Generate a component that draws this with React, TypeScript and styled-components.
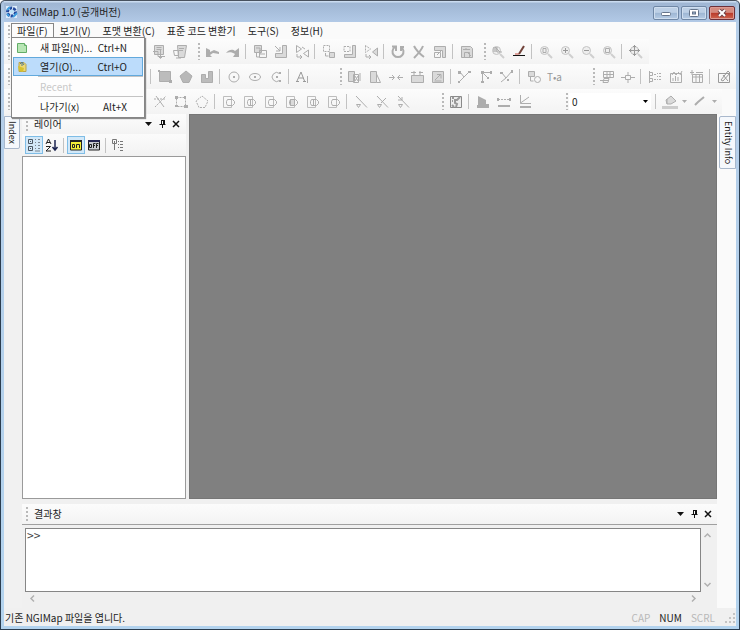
import React from "react";
import styled, { createGlobalStyle, css } from "styled-components";

const GlobalStyle = createGlobalStyle`
  * { box-sizing: border-box; }
  html, body { margin: 0; height: 100%; }
  body, button, select, textarea {
    font-family: "Noto Sans CJK KR", "Open Sans", sans-serif;
    font-size: 10px;
    line-height: 16px;
    color: #1c1c1c;
  }
  button { margin: 0; padding: 0; border: 0; background: none; }
`;

/* ---------- window frame ---------- */

const Window = styled.div`
  display: flex;
  flex-direction: column;
  min-height: 100vh;
  padding: 0 3px 3px;
  background: linear-gradient(#abc2de, #b5cee9 22px, #b3d3ee);
  border: 1px solid #2b3d4f;
  border-top-color: #48525f;
  border-radius: 5px 5px 0 0;
`;

const TitleBar = styled.header`
  display: flex;
  align-items: center;
  height: 21px;
  padding: 0 1px;
  gap: 3px;
  background: linear-gradient(#cbdcf0 1px, #9fb6d3 2px, #b2c9e6);
`;

const Title = styled.h1`
  flex: 1;
  margin: 0;
  font-size: 10px;
  font-weight: 400;
`;

const Caption = styled.div`
  display: flex;
  gap: 2px;
  padding-top: 3px;
`;

const CaptionButton = styled.button<{ $danger?: boolean }>`
  display: grid;
  place-items: center;
  width: 26px;
  height: 14px;
  border: 1px solid ${(p) => (p.$danger ? "#6e3038" : "#6f87a5")};
  border-radius: 2px;
  box-shadow: inset 0 0 0 1px ${(p) => (p.$danger ? "#dc9b93" : "#cfdeef")};
  background: ${(p) =>
    p.$danger
      ? "linear-gradient(#d58b7f 45%, #b93a2a 50%, #cf6650)"
      : "linear-gradient(#bdd0e6 45%, #9db6d3 50%, #b7cde6)"};
`;

const Client = styled.div`
  display: flex;
  flex: 1;
  flex-direction: column;
  background: #f0f0f0;
`;

/* ---------- menu ---------- */

const MenuBar = styled.nav`
  display: flex;
  align-items: stretch;
  height: 17px;
  padding-top: 1px;
  background: #fafafa;
`;

const MenuSlot = styled.div`
  position: relative;
  display: flex;
`;

const MenuButton = styled.button<{ $open?: boolean }>`
  padding: 0 5px;
  line-height: 14px;
  white-space: nowrap;
  border: 1px solid transparent;
  ${(p) =>
    p.$open &&
    css`
      background: #fcfcfc;
      border-color: #868686 #868686 transparent;
    `}
`;

const Popup = styled.div`
  position: absolute;
  z-index: 5;
  top: 100%;
  left: 0;
  width: 134px;
  padding: 0 1px 1px;
  margin-top: -2px;
  background: #fdfdfd;
  border: 1px solid #868686;
  box-shadow: 1px 1px 1px #8c8c8c;
`;

const PopupItem = styled.button<{ $active?: boolean }>`
  display: grid;
  grid-template-columns: 24px 1fr auto;
  align-items: center;
  width: 100%;
  height: 19px;
  padding: 0 15px 0 2px;
  text-align: left;
  white-space: nowrap;
  border: 1px solid ${(p) => (p.$active ? "#62a9dc" : "transparent")};
  background: ${(p) => (p.$active ? "#bcdcfb" : "transparent")};
  &:disabled { color: #c8c8c8; }
`;

const PopupRule = styled.hr`
  height: 1px;
  margin: 0 0 0 25px;
  border: 0;
  background: #c4c4c4;
`;

/* ---------- toolbars ---------- */

const Toolbars = styled.div`
  background: #fafafa;
`;

const ToolRow = styled.div`
  display: flex;
  align-items: stretch;
  height: 25px;
  overflow: hidden;
`;

const ToolBar = styled.div<{ $basis?: number }>`
  display: flex;
  flex: ${(p) => (p.$basis ? `0 0 ${p.$basis}px` : "0 0 auto")};
  align-items: center;
  padding-right: 3px;
  background: linear-gradient(#fcfcfc, #f3f3f3);
`;

const Grip = styled.span<{ $tall?: number }>`
  flex: none;
  align-self: center;
  width: 2px;
  height: ${(p) => p.$tall ?? 17}px;
  margin: 0 1px 0 4px;
  background: repeating-linear-gradient(#b9b9b9 0 2px, transparent 2px 4px);
`;

const Hidden = styled.span<{ $width: number }>`
  flex: none;
  width: ${(p) => p.$width}px;
`;

const ToolButton = styled.button`
  display: grid;
  flex: none;
  place-items: center;
  width: 21px;
  height: 21px;
  color: #adadad;
`;

const Divider = styled.span`
  flex: none;
  width: 1px;
  height: 15px;
  margin: 0 3px 0 2px;
  background: #c2c2c2;
`;

const Combo = styled.label`
  display: flex;
  position: relative;
  width: 82px;
  height: 17px;
  background: #fff;
  margin-right: 2px;
`;

const ComboSelect = styled.select`
  width: 100%;
  padding: 0 3px;
  border: 0;
  appearance: none;
  background: transparent;
  line-height: 17px;
`;

const ComboArrow = styled.svg`
  position: absolute;
  right: 3px;
  top: 7px;
  pointer-events: none;
`;

const DropButton = styled(ToolButton)`
  width: 9px;
`;

/* ---------- docking area ---------- */

const Workspace = styled.div`
  display: flex;
  flex: 1;
`;

const DockStrip = styled.aside<{ $right?: boolean }>`
  flex: none;
  width: ${(p) => (p.$right ? 19 : 18)}px;
  padding: 2px 0 0 ${(p) => (p.$right ? 2 : 0)}px;
  background: ${(p) => (p.$right ? "#fafafa" : "#f1f1f1")};
`;

const DockTab = styled.button<{ $right?: boolean }>`
  display: block;
  width: ${(p) => (p.$right ? 17 : 16)}px;
  padding: 4px 0;
  writing-mode: vertical-rl;
  font-size: 9px;
  line-height: 14px;
  background: #f5f8fc;
  border: 1px solid #a9b8cc;
  white-space: nowrap;
  border-radius: ${(p) => (p.$right ? "2px 0 0 2px" : "0 2px 2px 0")};
`;

const Center = styled.main`
  display: flex;
  flex: 1;
  flex-direction: column;
  gap: 5px;
  min-width: 0;
`;

const Upper = styled.div`
  display: flex;
  flex: 1;
  gap: 3px;
`;

const LayerPanel = styled.section`
  display: flex;
  flex: none;
  flex-direction: column;
  width: 164px;
`;

const PanelHeader = styled.div<{ $ruled?: boolean }>`
  display: flex;
  align-items: center;
  height: ${(p) => (p.$ruled ? 21 : 20)}px;
  padding-right: ${(p) => (p.$ruled ? 2 : 3)}px;
  background: linear-gradient(#fcfcfc, #f3f3f3);
  border-bottom: ${(p) => (p.$ruled ? "1px solid #a0a0a0" : "0")};
`;

const PanelTitle = styled.h2`
  flex: 1;
  margin: 0 0 0 5px;
  font-size: 10px;
  font-weight: 400;
`;

const PanelButton = styled.button`
  display: grid;
  place-items: center;
  width: 14px;
  height: 14px;
  color: #111;
`;

const PanelTools = styled.div`
  display: flex;
  align-items: center;
  height: 22px;
  padding: 0 3px;
  background: linear-gradient(#fbfbfb, #f2f2f2);
`;

const Toggle = styled.button<{ $on?: boolean }>`
  display: grid;
  place-items: center;
  width: 18px;
  height: 18px;
  border: 1px solid ${(p) => (p.$on ? "#7fbde6" : "transparent")};
  background: ${(p) => (p.$on ? "#d2e8f8" : "transparent")};
`;

const LayerList = styled.div`
  flex: 1;
  background: #fff;
  border: 1px solid #9a9a9a;
`;

const Canvas = styled.section`
  flex: 1;
  background: #808080;
  border: 1px solid #767676;
`;

const ResultPanel = styled.section`
  height: 104px;
`;

const ResultBody = styled.div`
  display: grid;
  grid-template-columns: 1fr 13px;
  grid-template-rows: 64px 15px;
  padding: 3px 3px 0;
`;

const Console = styled.textarea`
  width: 100%;
  height: 100%;
  padding: 0 1px;
  border: 1px solid #868686;
  background: #fff;
  resize: none;
  outline: none;
  line-height: 11px;
  font-size: 12px;
  color: #444;
`;

const ScrollBar = styled.div<{ $vertical?: boolean }>`
  display: flex;
  flex-direction: ${(p) => (p.$vertical ? "column" : "row")};
  justify-content: space-between;
  padding: ${(p) => (p.$vertical ? "1px 0" : "0 1px")};
  color: #b0b0b0;
`;

const ScrollButton = styled.button`
  display: grid;
  place-items: center;
  width: 13px;
  height: 13px;
  color: inherit;
`;

const StatusBar = styled.footer`
  display: flex;
  align-items: center;
  height: 18px;
  padding: 2px 0 0 1px;
  background: #f0f0f0;
`;

const StatusText = styled.span`
  flex: 1;
`;

const LockKey = styled.span<{ $on?: boolean }>`
  margin-right: 9px;
  color: ${(p) => (p.$on ? "#1c1c1c" : "#b8b8b8")};
`;

/* ---------- drawings ---------- */

const soft = { fill: "#dadada" };
const solid = { fill: "currentColor", stroke: "none" };
const lens = (
  <>
    <circle cx="6.5" cy="6.5" r="4" fill="#eee" stroke="#c4c4c4" />
    <path d="M10 10l4 4" strokeWidth="2" stroke="#cfcfcf" />
  </>
);
const boolShape = (
  <>
    <path stroke="#bdbdbd" d="M2.5 2.5h8v11h-8z" />
    <path d="M6.5 5.500h5l2 2v2l-2 2h-5l-1-2v-2z" />
  </>
);
const trimShape = <path d="M3 2l11 11.5M3.5 10.5h4l-2 3z" />;

const icons: Record<string, React.ReactNode> = {
  saveAll: <><path {...soft} d="M3.5 1.5h9v9h-9z" /><path d="M5.5 3.5h5M5.5 5.5h5M2 7.5h5v5h7M9.5 6v8M7 12l2.5 2.5L12 12" /></>,
  saveDoc: <><path {...soft} d="M5.5 1.5h9l-2 12h-6z" /><path d="M7 4.5h5M7 6.5h4M1.5 6.5h5v5h-4zM4 14h5" /></>,
  undo: <path {...solid} d="M2 4v9h6l-2-2 3-2 6 1V8l-5-2-4 2V6z" />,
  redo: <path {...solid} d="M1 9c3-4 7-4 9-2l4-3v9H8l2-3C7 8 4 8 1 9z" />,
  copyObj: <><path {...soft} d="M2.500 1.500h7v7h-7z" /><path d="M7.500 6.500h7v7h-7zM4 4h4v6h5M4.500 9v4h3" /></>,
  corner: <><path {...soft} d="M9.500 1.500h4v12h-11v-4h7z" /><path d="M2 2l5 5M7 3v4H3" /></>,
  mirror: <><path d="M2.500 1.500v7l5-3.500zM14.500 6v7l-5-3.500z" /><path d="M3 10v3h5M6 11l2 2-2 2M8 3l3 2" /></>,
  moveObj: <><path strokeDasharray="2 1" d="M2.500 1.500h6v6h-6z" /><path {...soft} d="M8.500 8.500h5v5h-5z" /><path d="M4.500 9v3h3" /></>,
  cornerDash: <><path {...soft} d="M10.500 1.500h3v12h-11v-3h8z" /><path strokeDasharray="2 1" d="M2 2.500h6v5H2z" /></>,
  mirrorDash: <><path strokeDasharray="2 1" d="M2.500 1.500v7l5-3.500z" /><path {...soft} d="M14.500 4v8l-5-4z" /><path d="M3 10v3h5M6 11l2 2-2 2" /></>,
  rotate: <path strokeWidth="2" d="M5 3a5.500 5.500 0 106 0M2 2.500h4V7M11 7V3h3" />,
  remove: <path strokeWidth="2" d="M3 2c2 4 6 8 10 11M12 2C10 7 7 10 3 14" />,
  scale: <><path {...soft} d="M2.500 2.500h11v11h-3v-7h-8z" /><path d="M2.500 8.500h6v5h-6zM5 11l5-5" /></>,
  paste: <><path {...soft} d="M2.500 2.500h9l2 2v9h-11z" /><path d="M4 5.500h7M5.500 13V8.500h5V13M7 4v2M9 9l3 3" /></>,
  zoomHand: <>{lens}<path d="M5 3l5 5M7 3v5h5" /><path {...solid} d="M3 3h4v5H3z" opacity=".6" /></>,
  pencil: <><path stroke="#111" strokeWidth="1" d="M2 11.500h12" /><path stroke="#72443b" strokeWidth="2" d="M13 2L8 10" /><path stroke="#c55045" d="M8 10H4" /></>,
  zoomPage: <>{lens}<path d="M5 4.500h3v4H5z" /></>,
  zoomIn: <>{lens}<path stroke="#999" d="M4 6.500h5M6.500 4v5" /></>,
  zoomOut: <>{lens}<path stroke="#999" d="M4 6.500h5" /></>,
  zoomBox: <>{lens}<path d="M4.500 4.500h4v4h-4z" /></>,
  zoomAll: <>{lens}<path stroke="#999" d="M1 6.500h11M6.500 1v11M5 2.500h3M5 10.500h3M2.500 5v3M10.500 5v3" /></>,
  rect: <><path d="M2.500 2.500h11v10h-11z" fill="#bcbcbc" /><path {...solid} d="M1 1h2v2H1zM12 11h3v3h-3z" /></>,
  pentagon: <path d="M8 2l6 5-3 6.500H5L2 7z" fill="#b8b8b8" />,
  lshape: <path d="M2.500 5.500h4v4h3v-7h4v11h-11z" fill="#bcbcbc" />,
  circle: <><circle cx="8" cy="8" r="5" /><path {...solid} d="M7 7h2v2H7z" /></>,
  ellipse: <><ellipse cx="8" cy="8" rx="5.500" ry="3.500" /><path {...solid} d="M7 7h2v2H7z" /></>,
  arc: <><path d="M11.500 4.500a4.500 4.500 0 100 7" /><path {...solid} d="M8 7h2v2H8zM11 3h2v2h-2zM11 11h2v2h-2z" /></>,
  textA: <><path stroke="#999" d="M2 12L6 3l3.500 9M3.500 9h5M1 12.500h3M8 12.500h3" /><path d="M12.500 7v7" /></>,
  buffer: <><path {...soft} d="M2.500 2.500h6v10h-6z" /><path d="M7.500 5.500h5v8h-5zM9 7l3 5M12 7l-3 5M14 4v8" /></>,
  shear: <><path {...soft} d="M3.500 2.500h6v11h-6z" /><path d="M9.500 5l4 8.500h-4" /></>,
  join: <><path d="M1 8.500h5M4 6l2.500 2.500L4 11M15 8.500h-5M12 6L9.500 8.500 12 11" /></>,
  split: <><path {...soft} d="M2.500 6.500h12v7h-12z" /><path d="M2 3.500h5M10 3.500h4M5 2v5M11 2v5" /></>,
  adjust: <><path {...soft} d="M2.500 2.500h11v11h-11z" /><path d="M5 11l5-5M7 5.500h4v4M4.500 12h7" /></>,
  vertexA: <><path d="M3 3l4 5 5-5M7 8l-5 5" /><path {...solid} d="M1 2h3v3H1zM11 2h3v2h-3zM1 12h2v2H1z" /></>,
  vertexB: <><path d="M4.500 13V3.500H13M5 4l5 5" /><path {...solid} d="M3 2h3v3H3zM12 2h2v3h-2zM3 12h3v2H3zM9 8h2v2H9z" /></>,
  vertexC: <><path d="M3 4l4 5 6-7M7 9l-5 4" /><path {...solid} d="M1 3h3v2H1zM12 1h2v3h-2zM8 10h2v2H8z" /></>,
  convert: <><path {...soft} d="M2.500 2.500h6v5h-6z" /><circle cx="11.500" cy="10.500" r="3" /><path d="M4.500 8v4h3" /></>,
  tableLink: <><path d="M4.500 2.500h10v6h-10zM4.500 5.500h10M8 2.500v6M11 2.500v6M1 11.500h8M5 9.500h5l-1 4H4z" /></>,
  node: <><path d="M1 8.500h4M11 8.500h4M5.500 6.500h5v4h-5zM8 3v3M8 11v3" /></>,
  tree: <><path d="M2.500 3.500h3v3h-3zM2.500 9.500h3v3h-3zM2.500 2v12M7 5.500h2M7 10.500h2M10 4.500h1M12 4.500h2M10 7.500h1M12 7.500h2M10 10.500h1M12 10.500h2" /></>,
  chart: <><path d="M2.500 4.500h11v9h-11zM5 12V9M7.500 12V7M10 12V8M12 6l2-4M4 6l2-3 2 3 3-3" /></>,
  grid: <><path d="M3.500 5.500h10v8h-10zM3.500 8h10M7 5v8M10.500 5v8M1 3.500h4M3 1v5M7 3.500h7" /></>,
  editDoc: <><path stroke="#999" d="M2.500 4.500h11v9h-11zM5 11l7-9 2 2-7 8zM7 6l5 6" /></>,
  breakLine: <><path strokeDasharray="2 1" d="M3 13L14 2M2 5h11" /><path d="M4 2l8 11" /></>,
  dashRect: <><path strokeDasharray="2 1" d="M3.500 3.500h9v9h-9z" /><path {...solid} d="M2 2h3v3H2zM11 2h2v3h-2zM2 11h3v2H2zM11 11h4v3h-4z" /></>,
  dashPent: <path strokeDasharray="2 1" d="M8 2l6 5-3 6.500H5L2 7z" />,
  boolA: boolShape,
  boolB: <>{boolShape}<path {...soft} d="M6.500 5.500h4v6h-4z" /></>,
  boolC: <>{boolShape}<path d="M8.500 5v6" /></>,
  trimA: trimShape,
  trimB: <>{trimShape}<path d="M12 4L7 9" /></>,
  trimC: <>{trimShape}<path d="M3 6h4V3" /></>,
  map: <><path d="M2.500 2.500h11v11h-11z" fill="#ededed" stroke="#8a8a8a" /><path d="M12 3L9 6H7v3l2 1-1 3M4 4h2M4 7h1M4 11l2 2" stroke="#999" strokeWidth="2" /></>,
  area: <path {...solid} d="M3 2l8 4v4h3v4H2v-3h1z" />,
  length: <><path strokeDasharray="2 1" d="M2 5.500h12" /><path {...solid} d="M2 11h12v2H2zM1 4h2v3H1zM13 4h2v3h-2z" /></>,
  angle: <><path d="M3.500 1v8.500H14M3.500 9L12 3" /><path {...solid} d="M3 12h11v2H3z" /></>,
  bucket: <><path {...soft} d="M4 6l5-4 5 5-5 3H5z" /><path d="M5 5v5" /><path d="M0 13.500h16" strokeWidth="3" stroke="#ccc" /></>,
  brush: <path strokeWidth="2" d="M3 11l3-3 6-5" />,
};

type GlyphProps = { name: string };
const Glyph = ({ name }: GlyphProps) => (
  <svg width="16" height="16" viewBox="0 0 16 16" fill="none" stroke="currentColor" aria-hidden="true">
    {icons[name]}
  </svg>
);

const ReplaceLabel = styled.span`
  color: #999;
`;

const Down = () => (
  <svg width="7" height="4" viewBox="0 0 7 4" aria-hidden="true"><path d="M0 0h7L3.500 4z" fill="currentColor" /></svg>
);

const SmallDown = () => (
  <svg width="5" height="3" viewBox="0 0 5 3" aria-hidden="true"><path d="M0 0h5L2.500 3z" fill="currentColor" /></svg>
);

const Tools = ({ items }: { items: string }) => (
  <>
    {items.split(" ").map((name, i) =>
      name === "|" ? (
        <Divider key={i} />
      ) : (
        <ToolButton key={i} type="button" aria-label={name}>
          {name === "replace" ? <ReplaceLabel>T•a</ReplaceLabel> : <Glyph name={name} />}
        </ToolButton>
      ),
    )}
  </>
);

const PanelActions = () => (
  <>
    <PanelButton type="button" aria-label="menu"><Down /></PanelButton>
    <PanelButton type="button" aria-label="pin">
      <svg width="9" height="10" viewBox="0 0 9 10" fill="none" stroke="currentColor">
        <path d="M3 1.500h3.500M3.500 1v4M6 1v4M1.500 5.500h6M4.500 6v3" /><path d="M6 1v4" strokeWidth="2" />
      </svg>
    </PanelButton>
    <PanelButton type="button" aria-label="close">
      <svg width="8" height="8" viewBox="0 0 8 8" stroke="currentColor" strokeWidth="1.500"><path d="M1 1l6 6M7 1L1 7" /></svg>
    </PanelButton>
  </>
);

const Chevron = ({ d }: { d: string }) => (
  <svg width="9" height="9" viewBox="0 0 9 9" fill="none" stroke="currentColor" strokeWidth="1.500"><path d={d} /></svg>
);

const menus = ["보기(V)", "포맷 변환(C)", "표준 코드 변환기", "도구(S)", "정보(H)"];

export default function App() {
  return (
    <>
      <GlobalStyle />
      <Window>
        <TitleBar>
          <svg width="14" height="14" viewBox="0 0 14 14" aria-hidden="true">
            <path d="M1 1h11v12H1z" fill="#dcebfa" />
            <circle cx="6.500" cy="7" r="4" fill="none" stroke="#23489c" strokeWidth="3" strokeDasharray="3 1" />
            <path d="M2 5l3-3M8 12l4-4M2 9l2 2" stroke="#3f9fe0" strokeWidth="2" />
            <circle cx="7" cy="6.500" r="2" fill="#bfe3f8" />
          </svg>
          <Title>NGIMap 1.0 (공개버전)</Title>
          <Caption>
            <CaptionButton type="button" aria-label="minimize">
              <svg width="10" height="8" viewBox="0 0 10 8"><rect x=".5" y="3.500" width="9" height="3" rx="1" fill="#fff" stroke="#65748a" /></svg>
            </CaptionButton>
            <CaptionButton type="button" aria-label="maximize">
              <svg width="10" height="8" viewBox="0 0 10 8"><rect x=".5" y=".5" width="9" height="7" rx="1" fill="#fff" stroke="#65748a" /><rect x="3.500" y="3" width="3" height="2" fill="#9db6d3" stroke="#65748a" /></svg>
            </CaptionButton>
            <CaptionButton type="button" aria-label="close" $danger>
              <svg width="10" height="8" viewBox="0 0 10 8"><path d="M2 1l6 6M8 1L2 7" stroke="#6f4247" strokeWidth="4" /><path d="M2 1l6 6M8 1L2 7" stroke="#fff" strokeWidth="2" /></svg>
            </CaptionButton>
          </Caption>
        </TitleBar>

        <Client>
          <MenuBar>
            <Grip $tall={13} />
            <MenuSlot>
              <MenuButton type="button" aria-expanded="true" $open>파일(F)</MenuButton>
              <Popup role="menu">
                <PopupItem type="button" role="menuitem">
                  <svg width="12" height="12" viewBox="0 0 12 12"><path d="M1.500 1.500h7l2 2v7h-9z" fill="#b8e6b5" stroke="#63ad68" /><path d="M8.500 1.500v2h2" fill="#fff" stroke="#63ad68" /></svg>
                  <span>새 파일(N)...</span><span>Ctrl+N</span>
                </PopupItem>
                <PopupItem type="button" role="menuitem" $active>
                  <svg width="12" height="12" viewBox="0 0 12 12"><path d="M3 1.500h5l2 2v7H3z" fill="#ecd873" stroke="#b7a452" /><path d="M2 5l6 2-1 4-4-1z" fill="#d6c130" /><path d="M4 3l2-2 2 3M6 1v4" stroke="#567b91" fill="none" /></svg>
                  <span>열기(O)...</span><span>Ctrl+O</span>
                </PopupItem>
                <PopupRule />
                <PopupItem type="button" role="menuitem" disabled><span /><span>Recent</span></PopupItem>
                <PopupRule />
                <PopupItem type="button" role="menuitem"><span /><span>나가기(x)</span><span>Alt+X</span></PopupItem>
              </Popup>
            </MenuSlot>
            {menus.map((m) => <MenuButton key={m} type="button">{m}</MenuButton>)}
          </MenuBar>

          <Toolbars>
            <ToolRow>
              <ToolBar $basis={190}><Grip /><Hidden $width={137} /><Tools items="saveAll saveDoc" /></ToolBar>
              <ToolBar $basis={286}><Grip /><Tools items="undo redo | copyObj corner mirror | moveObj cornerDash mirrorDash | rotate remove scale | paste" /></ToolBar>
              <ToolBar><Grip /><Tools items="zoomHand pencil | zoomPage zoomIn zoomOut zoomBox | zoomAll" /></ToolBar>
            </ToolRow>
            <ToolRow>
              <ToolBar $basis={332}><Grip /><Hidden $width={137} /><Divider /><Tools items="rect pentagon lshape | circle ellipse arc | textA" /></ToolBar>
              <ToolBar $basis={253}><Grip /><Tools items="buffer shear join split adjust | vertexA vertexB vertexC | convert replace" /></ToolBar>
              <ToolBar><Grip /><Tools items="tableLink node | tree chart grid | editDoc" /></ToolBar>
            </ToolRow>
            <ToolRow>
              <ToolBar $basis={434}><Grip /><Hidden $width={138} /><Tools items="breakLine dashRect dashPent | boolA boolC boolA boolB boolC boolA | trimA trimB trimC" /></ToolBar>
              <ToolBar $basis={124}><Grip /><Tools items="map | area length angle" /></ToolBar>
              <ToolBar>
                <Grip />
                <Combo>
                  <ComboSelect aria-label="값" defaultValue="0"><option>0</option></ComboSelect>
                  <ComboArrow width="5" height="3" viewBox="0 0 5 3"><path d="M0 0h5L2.500 3z" /></ComboArrow>
                </Combo>
                <Divider />
                <Tools items="bucket" /><DropButton type="button" aria-label="fill"><SmallDown /></DropButton>
                <Tools items="brush" /><DropButton type="button" aria-label="line"><SmallDown /></DropButton>
              </ToolBar>
            </ToolRow>
          </Toolbars>

          <Workspace>
            <DockStrip><DockTab type="button">Index</DockTab></DockStrip>
            <Center>
              <Upper>
                <LayerPanel>
                  <PanelHeader><Grip $tall={14} /><PanelTitle>레이어</PanelTitle><PanelActions /></PanelHeader>
                  <PanelTools>
                    <Toggle type="button" aria-label="categorized" $on>
                      <svg width="14" height="14" viewBox="0 0 14 14" fill="none" stroke="#4d5863"><path d="M1.500 1.500h4v4h-4zM1.500 8.500h4v4h-4zM3 3.500h1M3 10.500h1" /><path stroke="#7c8791" d="M8 1.500h1M11 1.500h2M8 4.500h1M11 4.500h2M8 7.500h1M11 7.500h2M8 10.500h1M11 10.500h2M8 13h5" /></svg>
                    </Toggle>
                    <Toggle type="button" aria-label="alphabetical">
                      <svg width="14" height="14" viewBox="0 0 14 14" fill="none" stroke="#222"><path d="M1 6l2.500-5L6 6M2 4.500h3M1 8.500h4.500L1 13h5" /><path stroke="#1c2450" strokeWidth="1.500" d="M10 2v9M7.500 9l2.500 3 2.500-3" /></svg>
                    </Toggle>
                    <Divider />
                    <Toggle type="button" aria-label="on" $on>
                      <svg width="12" height="11" viewBox="0 0 12 11" fill="none" stroke="#222"><path fill="#f5ef37" d="M.5 1h11v9H.5z" /><path d="M0 1h12" strokeWidth="2" /><path d="M2.500 4.500h2v3h-2zM6.500 8V4.500h3V8" /></svg>
                    </Toggle>
                    <Toggle type="button" aria-label="off">
                      <svg width="12" height="11" viewBox="0 0 12 11" fill="none" stroke="#222"><path fill="#c9cbd1" d="M.5 1h11v9H.5z" /><path d="M0 1h12" stroke="#252550" strokeWidth="2" /><path d="M1.500 4.500h2v3h-2zM5.500 8V3.500h2M5 5.500h2M8.500 8V3.500h2M8 5.500h2" /></svg>
                    </Toggle>
                    <Divider />
                    <Toggle type="button" aria-label="tree">
                      <svg width="14" height="14" viewBox="0 0 14 14" fill="none" stroke="#777"><path d="M1.500 1.500h4v4h-4zM3.500 3v9M7 3.500h1M9 3.500h3M7 6.500h1M9 6.500h3M7 9.500h1M9 9.500h3M9 12.500h3" /></svg>
                    </Toggle>
                  </PanelTools>
                  <LayerList />
                </LayerPanel>
                <Canvas />
              </Upper>
              <ResultPanel>
                <PanelHeader $ruled><Grip $tall={15} /><PanelTitle>결과창</PanelTitle><PanelActions /></PanelHeader>
                <ResultBody>
                  <Console aria-label="결과창" defaultValue=">>" />
                  <ScrollBar $vertical>
                    <ScrollButton type="button" aria-label="up"><Chevron d="M1.500 6l3-3 3 3" /></ScrollButton>
                    <ScrollButton type="button" aria-label="down"><Chevron d="M1.500 3l3 3 3-3" /></ScrollButton>
                  </ScrollBar>
                  <ScrollBar>
                    <ScrollButton type="button" aria-label="left"><Chevron d="M6 1.500l-3 3 3 3" /></ScrollButton>
                    <ScrollButton type="button" aria-label="right"><Chevron d="M3 1.500l3 3-3 3" /></ScrollButton>
                  </ScrollBar>
                </ResultBody>
              </ResultPanel>
            </Center>
            <DockStrip $right><DockTab type="button" $right>Entity Info</DockTab></DockStrip>
          </Workspace>

          <StatusBar>
            <StatusText>기존 NGIMap 파일을 엽니다.</StatusText>
            <LockKey>CAP</LockKey><LockKey $on>NUM</LockKey><LockKey>SCRL</LockKey>
            <svg width="12" height="12" viewBox="0 0 12 12" fill="#c4c4c4"><path d="M9 1h2v2H9zM9 5h2v2H9zM5 5h2v2H5zM9 9h2v2H9zM5 9h2v2H5zM1 9h2v2H1z" /></svg>
          </StatusBar>
        </Client>
      </Window>
    </>
  );
}
